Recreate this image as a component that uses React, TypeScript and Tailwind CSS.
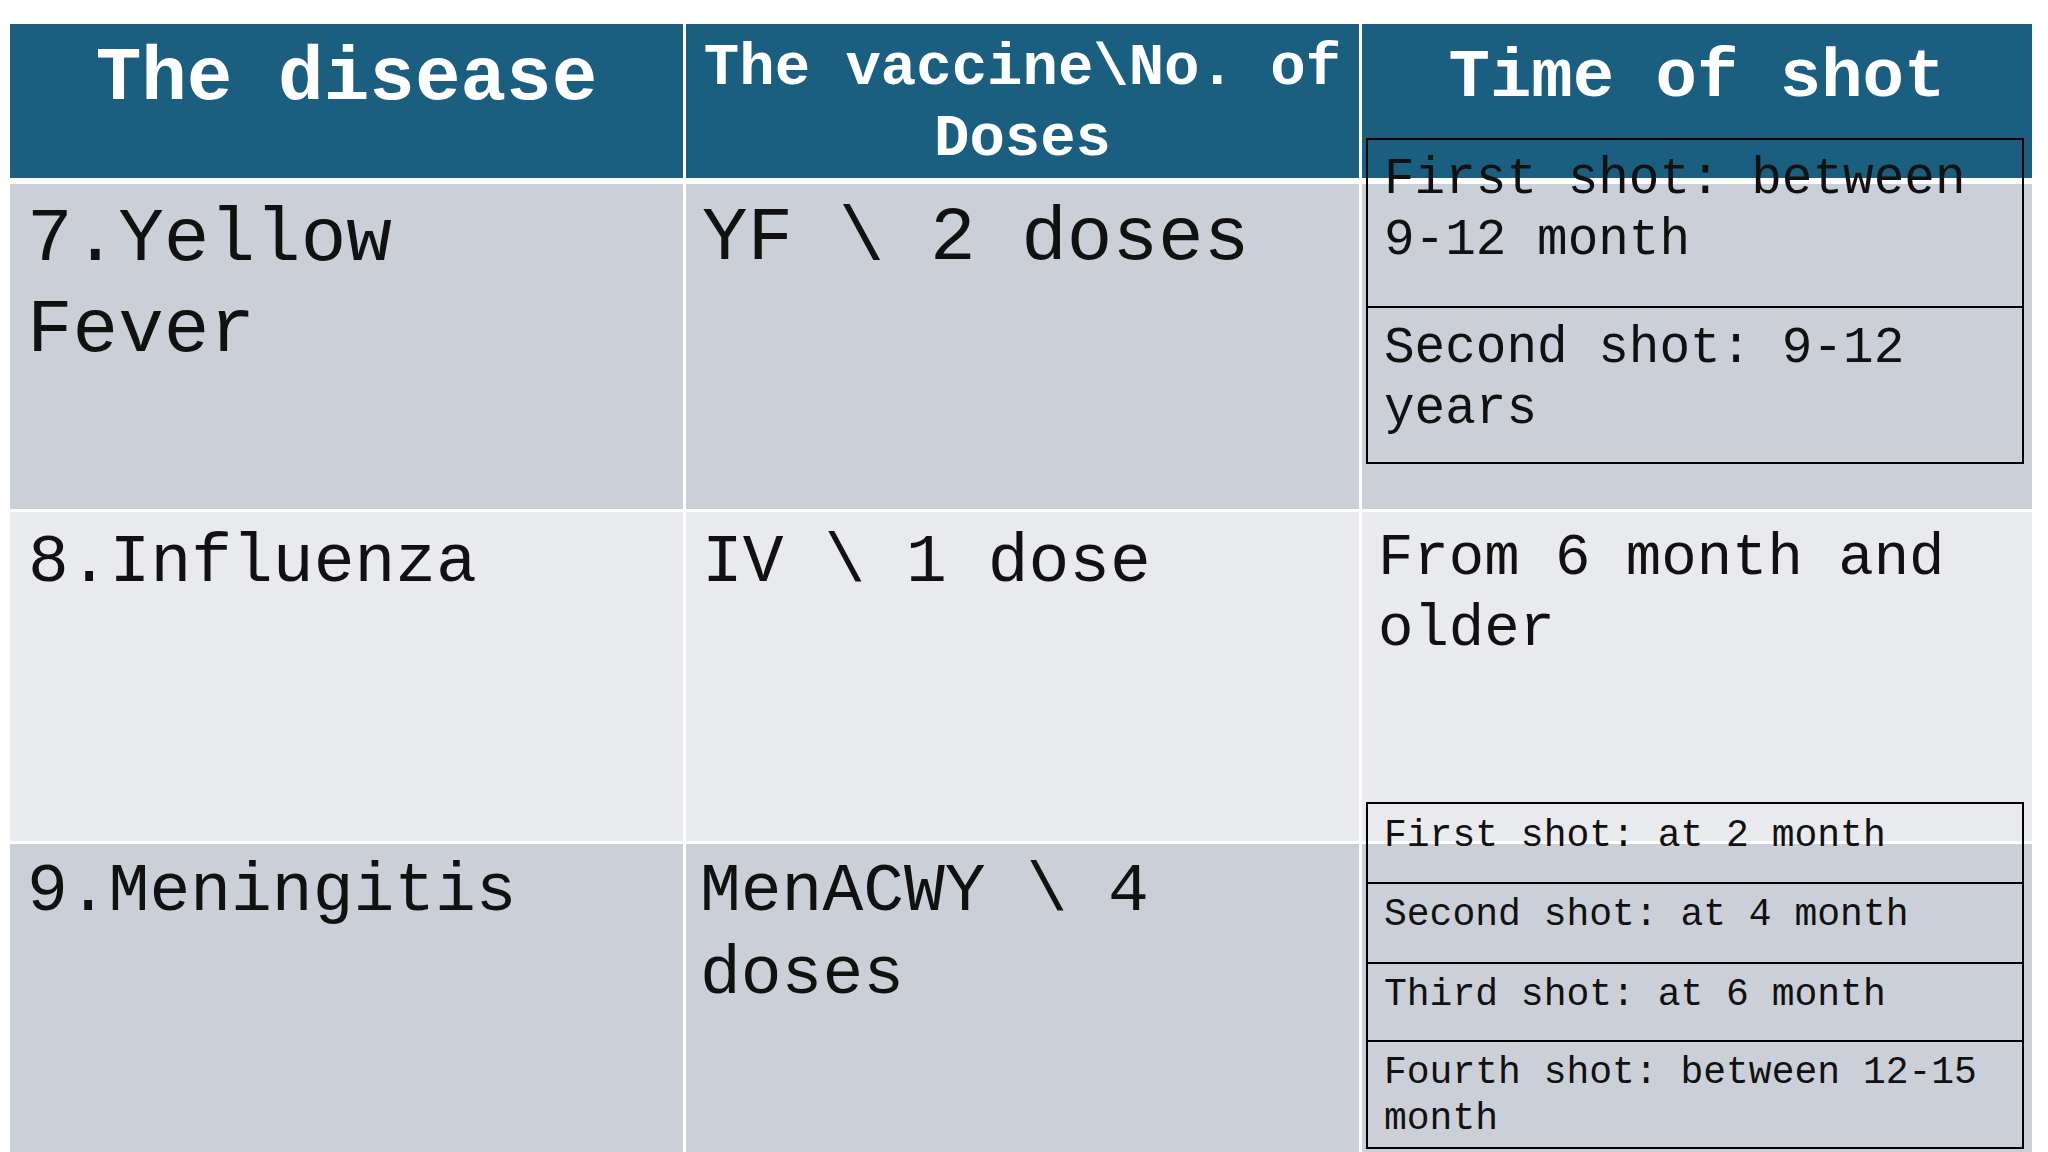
export default function App() {
  const mono = "font-['Liberation_Mono','Courier_New',monospace]"

  return (
    <div className={`h-[1152px] w-[2048px] overflow-hidden bg-white ${mono} leading-[1.2] text-[#111]`}>
      <div className="ml-[10px] mt-[24px] flex w-[2022px] flex-col gap-[3px]">
        {/* header */}
        <div className="mb-[3px] grid h-[154px] grid-cols-[673px_673px_670px] gap-x-[3px] font-bold text-white">
          <div className="bg-[#1a5f7f] pt-[10px] text-center text-[76px]">The disease</div>
          <div className="bg-[#1a5f7f] pt-[10px] text-center text-[59px]">
            The vaccine\No. of
            <br />
            Doses
          </div>
          <div className="bg-[#1a5f7f] pt-[13px] text-center text-[69px]">Time of shot</div>
        </div>

        {/* 7. Yellow fever */}
        <div className="grid h-[325px] grid-cols-[673px_673px_670px] gap-x-[3px]">
          <div className="bg-[#cbd0d8] pl-[17px] pt-[11px] text-[76px]">
            7.Yellow
            <br />
            Fever
          </div>
          <div className="bg-[#cbd0d8] pl-[16px] pt-[10px] text-[76px]">YF \ 2 doses</div>
          <div className="bg-[#cbd0d8]">
            <div className="relative z-10 -mt-[46px] ml-[4px] flex h-[326px] w-[658px] flex-col border-2 border-black text-[51px]">
              <div className="h-[168px] border-b-2 border-black pl-[16px] pt-[9px]">First shot: between 9-12 month</div>
              <div className="flex-1 pl-[16px] pt-[10px]">Second shot: 9-12 years</div>
            </div>
          </div>
        </div>

        {/* 8. Influenza */}
        <div className="grid h-[329px] grid-cols-[673px_673px_670px] gap-x-[3px]">
          <div className="bg-[#e8eaed] pl-[18px] pt-[10px] text-[68px]">8.Influenza</div>
          <div className="bg-[#e8eaed] pl-[16px] pt-[10px] text-[68px]">IV \ 1 dose</div>
          <div className="bg-[#e8eaed] pl-[16px] pr-[10px] pt-[12px] text-[59px]">From 6 month and older</div>
        </div>

        {/* 9. Meningitis */}
        <div className="grid h-[308px] grid-cols-[673px_673px_670px] gap-x-[3px]">
          <div className="bg-[#cbd0d8] pl-[17px] pt-[7px] text-[68px]">9.Meningitis</div>
          <div className="bg-[#cbd0d8] pl-[14px] pt-[6px] text-[68px] leading-[83px]">
            MenACWY \ 4
            <br />
            doses
          </div>
          <div className="bg-[#cbd0d8]">
            <div className="relative z-10 -mt-[42px] ml-[4px] flex h-[347px] w-[658px] flex-col border-2 border-black text-[38px]">
              <div className="h-[80px] border-b-2 border-black pl-[16px] pt-[9px]">First shot: at 2 month</div>
              <div className="h-[80px] border-b-2 border-black pl-[16px] pt-[8px]">Second shot: at 4 month</div>
              <div className="h-[78px] border-b-2 border-black pl-[16px] pt-[8px]">Third shot: at 6 month</div>
              <div className="flex-1 pl-[16px] pr-[20px] pt-[8px]">Fourth shot: between 12-15 month</div>
            </div>
          </div>
        </div>
      </div>
    </div>
  )
}
